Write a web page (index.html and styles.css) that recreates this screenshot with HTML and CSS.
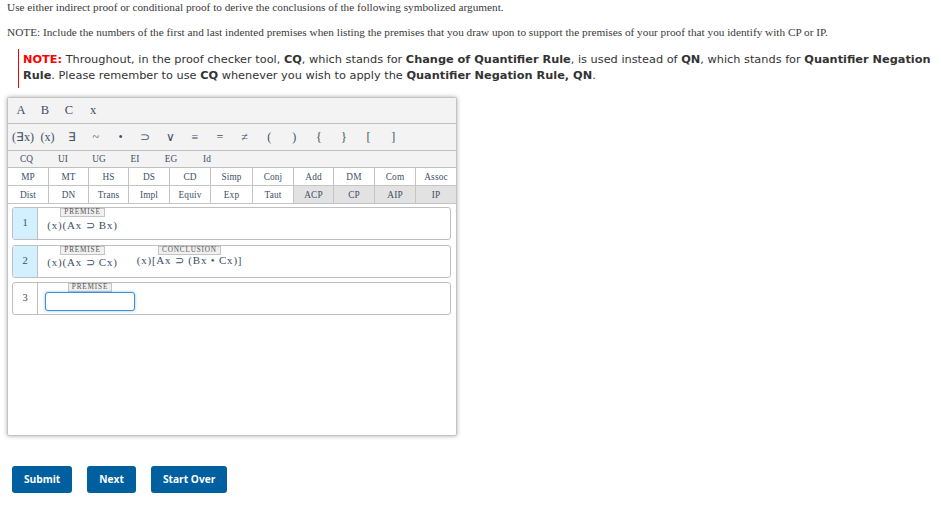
FILE: index.html
```html
<!DOCTYPE html>
<html lang="en">
<head>
<meta charset="utf-8">
<title>Proof checker</title>
<link rel="stylesheet" href="styles.css">
</head>
<body>
<p class="intro first">Use either indirect proof or conditional proof to derive the conclusions of the following symbolized argument.</p>
<p class="intro second">NOTE: Include the numbers of the first and last indented premises when listing the premises that you draw upon to support the premises of your proof that you identify with CP or IP.</p>
<div class="note"><strong class="red">NOTE:</strong> Throughout, in the proof checker tool, <strong>CQ</strong>, which stands for <strong>Change of Quantifier Rule</strong>, is used instead of <strong>QN</strong>, which stands for <strong>Quantifier Negation Rule</strong>. Please remember to use <strong>CQ</strong> whenever you wish to apply the <strong>Quantifier Negation Rule, QN</strong>.</div>
<div class="panel">
  <div class="letters"><span>A</span><span>B</span><span>C</span><span>x</span></div>
  <div class="symbols">
    <span class="s1">(∃x)</span><span class="s2">(x)</span><span class="s3">∃</span><span>~</span><span>•</span><span>⊃</span><span>∨</span><span>≡</span><span>=</span><span>≠</span><span>(</span><span>)</span><span>{</span><span>}</span><span>[</span><span>]</span>
  </div>
  <div class="rules-a"><span>CQ</span><span>UI</span><span>UG</span><span>EI</span><span>EG</span><span>Id</span></div>
  <div class="grid">
    <span>MP</span><span>MT</span><span>HS</span><span>DS</span><span>CD</span><span>Simp</span><span>Conj</span><span>Add</span><span>DM</span><span>Com</span><span>Assoc</span>
    <span>Dist</span><span>DN</span><span>Trans</span><span>Impl</span><span>Equiv</span><span>Exp</span><span>Taut</span><span class="dim">ACP</span><span class="dim">CP</span><span class="dim">AIP</span><span class="dim">IP</span>
  </div>
  <div class="lines">
    <div class="line">
      <div class="num cited">1</div>
      <div class="body"><div class="cell c1"><span class="tag">PREMISE</span><span class="formula">(x)(Ax ⊃ Bx)</span></div></div>
    </div>
    <div class="line">
      <div class="num cited">2</div>
      <div class="body">
        <div class="cell c1"><span class="tag">PREMISE</span><span class="formula">(x)(Ax ⊃ Cx)</span></div>
        <div class="cell c2"><span class="tag">CONCLUSION</span><span class="formula">(x)[Ax ⊃ (Bx • Cx)]</span></div>
      </div>
    </div>
    <div class="line">
      <div class="num">3</div>
      <div class="body"><div class="cell c3"><span class="tag">PREMISE</span><input class="entry" type="text" aria-label="Premise"></div></div>
    </div>
  </div>
</div>
<div class="actions"><button type="button">Submit</button><button type="button">Next</button><button type="button">Start Over</button></div>
</body>
</html>
```
FILE: styles.css
```css
* { box-sizing: border-box; }
html, body { margin: 0; padding: 0; background: #fff; }
body { padding: 0 0 0 7px; width: 941px; height: 523px; overflow: hidden; font-family: "Liberation Serif", serif; color: #333; }
.intro { margin: 0; font-size: 11.27px; line-height: 14px; color: #3a3a3a; white-space: nowrap; }
.first { padding-top: 0; }
.second { margin-top: 11px; }
.note { margin: 10px 0 0 11px; width: 922px; height: 39px; border-left: 1px solid #f00; padding: 2px 0 0 4px; font-family: "DejaVu Sans", sans-serif; font-size: 11.32px; line-height: 16px; color: #333; }
.note strong { color: #333; }
.note .red { color: #f00; }
.panel { margin-top: 9px; width: 450px; height: 339px; background: #fff; border: 1px solid #c4c4c4; border-radius: 2px; box-shadow: 0 0 4px rgba(60,70,90,.45); font-family: "Liberation Serif", serif; color: #3d4f66; overflow: hidden; }
.letters { height: 26px; background: #f3f3f3; border-bottom: 1px solid #bfbfbf; display: flex; align-items: center; padding-left: 1px; font-size: 12.5px; }
.letters span { width: 24px; text-align: center; }
.symbols { height: 27px; padding-left: 3px; background: #f3f3f3; border-bottom: 1px solid #bfbfbf; display: flex; align-items: center; font-size: 12px; }
.symbols span { display: block; width: 24.8px; text-align: center; }
.symbols .s1 { width: 24px; }
.symbols .s2 { width: 25px; }
.symbols .s3 { width: 23.4px; }
.rules-a { height: 17px; background: #f3f3f3; border-bottom: 1px solid #bfbfbf; display: flex; align-items: center; font-size: 9.3px; letter-spacing: .15px; }
.rules-a span { width: 36px; text-align: center; }
.rules-a span:first-child { width: 37px; }
.grid { display: grid; grid-template-columns: 41px 40px 40px 41px 41px 42px 41px 40px 41px 41px 1fr; grid-auto-rows: 18px; font-size: 9.3px; letter-spacing: .15px; }
.grid span { display: flex; align-items: center; justify-content: center; border-right: 1px solid #c4c4c4; border-bottom: 1px solid #c4c4c4; background: #fff; }
.grid span:nth-child(11n) { border-right: 0; }
.grid .dim { background: #e2e2e2; }
.lines { padding: 3.3px 5px 0 4px; display: flex; flex-direction: column; gap: 4.5px; }
.line { display: flex; height: 33px; border: 1px solid #bfbfbf; border-radius: 3px; overflow: hidden; background: #fff; }
.num { flex: 0 0 25px; border-right: 1px solid #bfbfbf; display: flex; align-items: center; justify-content: center; font-size: 10.5px; padding-bottom: 3px; }
.num.cited { background: #d2f0ff; }
.line:nth-child(2) .num { padding-bottom: 1px; }
.body { display: flex; flex: 1; }
.cell { display: flex; flex-direction: column; align-items: center; }
.c1 { margin-left: 9px; width: 71px; }
.c2 { margin-left: 16px; width: 111px; }
.c3 { margin-left: 7px; width: 90px; }
.tag { height: 9px; padding: 0 3px; background: #f0f0f0; border: 1px solid #c4c4c4; font-size: 7.2px; line-height: 7px; letter-spacing: .85px; color: #555; }
.formula { font-size: 11px; line-height: 14px; letter-spacing: .8px; white-space: nowrap; margin-top: 1px; }
.line:nth-child(2) .c1 .formula { margin-top: 0; }
.c2 .formula { margin-top: -2px; }
.entry { width: 90px; height: 19px; border: 1px solid #3f8fdc; border-radius: 3px; box-shadow: 0 0 3px rgba(60,150,240,.6); outline: 0; background: #fff; }
.actions { display: flex; gap: 15px; margin: 30px 0 0 5px; }
.actions button { height: 27px; padding: 0 12px 2px; border: 0; border-radius: 3px; background: #005f9e; color: #fff; font: 700 10.2px "Open Sans", sans-serif; }
```
